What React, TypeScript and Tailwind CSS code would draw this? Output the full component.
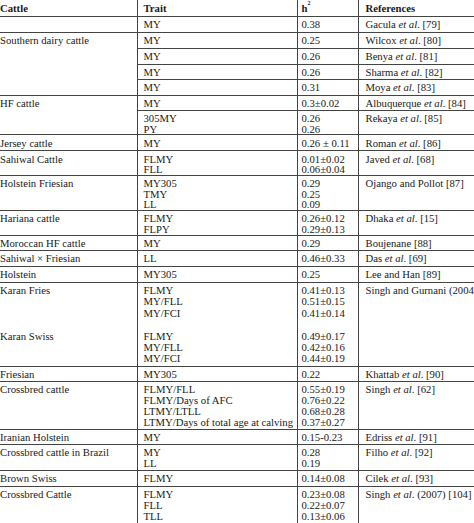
import React from 'react';

type Row = {
  h: string;
  lh: string;
  cattle?: string[];
  span?: number;
  trait: string[];
  h2: string[];
  ref: React.ReactNode;
};

const EtAl = () => <i>et al</i>;

const rows: Row[] = [
  { h: 'h-[16px]', lh: 'leading-[11px]', cattle: [''], trait: ['MY'], h2: ['0.38'], ref: <>Gacula <EtAl />. [79]</> },
  { h: 'h-[16px]', lh: 'leading-[11px]', cattle: ['Southern dairy cattle'], span: 4, trait: ['MY'], h2: ['0.25'], ref: <>Wilcox <EtAl />. [80]</> },
  { h: 'h-[16px]', lh: 'leading-[11px]', trait: ['MY'], h2: ['0.26'], ref: <>Benya <EtAl />. [81]</> },
  { h: 'h-[15px]', lh: 'leading-[11px]', trait: ['MY'], h2: ['0.26'], ref: <>Sharma <EtAl />. [82]</> },
  { h: 'h-[16px]', lh: 'leading-[11px]', trait: ['MY'], h2: ['0.31'], ref: <>Moya <EtAl />. [83]</> },
  { h: 'h-[15px]', lh: 'leading-[11px]', cattle: ['HF cattle'], span: 2, trait: ['MY'], h2: ['0.3±0.02'], ref: <>Albuquerque <EtAl />. [84]</> },
  { h: 'h-[23px]', lh: 'leading-[10.5px]', trait: ['305MY', 'PY'], h2: ['0.26', '0.26'], ref: <>Rekaya <EtAl />. [85]</> },
  { h: 'h-[16px]', lh: 'leading-[11px]', cattle: ['Jersey cattle'], trait: ['MY'], h2: ['0.26 ± 0.11'], ref: <>Roman <EtAl />. [86]</> },
  { h: 'h-[24px]', lh: 'leading-[10.5px]', cattle: ['Sahiwal Cattle'], trait: ['FLMY', 'FLL'], h2: ['0.01±0.02', '0.06±0.04'], ref: <>Javed <EtAl />. [68]</> },
  { h: 'h-[35px]', lh: 'leading-[10.5px]', cattle: ['Holstein Friesian'], trait: ['MY305', 'TMY', 'LL'], h2: ['0.29', '0.25', '0.09'], ref: <>Ojango and Pollot [87]</> },
  { h: 'h-[25px]', lh: 'leading-[10.5px]', cattle: ['Hariana cattle'], trait: ['FLMY', 'FLPY'], h2: ['0.26±0.12', '0.29±0.13'], ref: <>Dhaka <EtAl />. [15]</> },
  { h: 'h-[15px]', lh: 'leading-[11px]', cattle: ['Moroccan HF cattle'], trait: ['MY'], h2: ['0.29'], ref: <>Boujenane [88]</> },
  { h: 'h-[16px]', lh: 'leading-[11px]', cattle: ['Sahiwal × Friesian'], trait: ['LL'], h2: ['0.46±0.33'], ref: <>Das <EtAl />. [69]</> },
  { h: 'h-[16px]', lh: 'leading-[11px]', cattle: ['Holstein'], trait: ['MY305'], h2: ['0.25'], ref: <>Lee and Han [89]</> },
  {
    h: 'h-[84px]',
    lh: 'leading-[11.4px]',
    cattle: ['Karan Fries', '', '', '', 'Karan Swiss'],
    trait: ['FLMY', 'MY/FLL', 'MY/FCI', '', 'FLMY', 'MY/FLL', 'MY/FCI'],
    h2: ['0.41±0.13', '0.51±0.15', '0.41±0.14', '', '0.49±0.17', '0.42±0.16', '0.44±0.19'],
    ref: <>Singh and Gurnani (2004)</>,
  },
  { h: 'h-[15px]', lh: 'leading-[11px]', cattle: ['Friesian'], trait: ['MY305'], h2: ['0.22'], ref: <>Khattab <EtAl />. [90]</> },
  {
    h: 'h-[48px]',
    lh: 'leading-[11px]',
    cattle: ['Crossbred cattle'],
    trait: ['FLMY/FLL', 'FLMY/Days of AFC', 'LTMY/LTLL', 'LTMY/Days of total age at calving'],
    h2: ['0.55±0.19', '0.76±0.22', '0.68±0.28', '0.37±0.27'],
    ref: <>Singh <EtAl />. [62]</>,
  },
  { h: 'h-[15px]', lh: 'leading-[11px]', cattle: ['Iranian Holstein'], trait: ['MY'], h2: ['0.15-0.23'], ref: <>Edriss <EtAl />. [91]</> },
  { h: 'h-[26px]', lh: 'leading-[10.8px]', cattle: ['Crossbred cattle in Brazil'], trait: ['MY', 'LL'], h2: ['0.28', '0.19'], ref: <>Filho <EtAl />. [92]</> },
  { h: 'h-[16px]', lh: 'leading-[11px]', cattle: ['Brown Swiss'], trait: ['FLMY'], h2: ['0.14±0.08'], ref: <>Cilek <EtAl />. [93]</> },
  {
    h: 'h-[38px]',
    lh: 'leading-[11px]',
    cattle: ['Crossbred Cattle'],
    trait: ['FLMY', 'FLL', 'TLL'],
    h2: ['0.23±0.08', '0.22±0.07', '0.13±0.06'],
    ref: <>Singh <EtAl />. (2007) [104]</>,
  },
];

function Lines({ items }: { items: string[] }) {
  return (
    <>
      {items.map((t, i) => (
        <div key={i} className="whitespace-nowrap">
          {t === '' ? '\u00a0' : t}
        </div>
      ))}
    </>
  );
}

const cell = 'border-b border-[#444] align-top pt-[2.5px] whitespace-nowrap';

export default function App() {
  return (
    <div
      className="w-[474px] h-[523px] overflow-hidden bg-white text-[#1a1a1a] text-[10.7px]"
      style={{ fontFamily: '"Liberation Serif", "Times New Roman", serif' }}
    >
      <table className="table-fixed border-collapse w-[497px]">
        <colgroup>
          <col className="w-[137px]" />
          <col className="w-[160px]" />
          <col className="w-[61px]" />
          <col className="w-[139px]" />
        </colgroup>
        <thead>
          <tr className="h-[16px] leading-[11px] font-bold text-left">
            <th className={`${cell} border-r pl-0 font-bold`}>Cattle</th>
            <th className={`${cell} border-r pl-[6px] font-bold`}>Trait</th>
            <th className={`${cell} border-r pl-[4px] font-bold`}>
              h<sup className="text-[6px] align-[4px]">2</sup>
            </th>
            <th className={`${cell} pl-[7px] font-bold`}>References</th>
          </tr>
        </thead>
        <tbody>
          {rows.map((r, i) => (
            <tr key={i} className={`${r.h} ${r.lh}`}>
              {r.cattle && (
                <td rowSpan={r.span ?? 1} className={`${cell} border-r pl-0`}>
                  <Lines items={r.cattle} />
                </td>
              )}
              <td className={`${cell} border-r pl-[6px]`}>
                <Lines items={r.trait} />
              </td>
              <td className={`${cell} border-r pl-[4px]`}>
                <Lines items={r.h2} />
              </td>
              <td className={`${cell} pl-[7px]`}>{r.ref}</td>
            </tr>
          ))}
        </tbody>
      </table>
    </div>
  );
}
